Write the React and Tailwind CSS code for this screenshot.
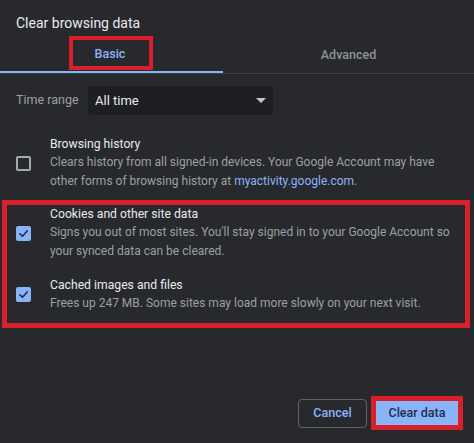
import React from "react";

function Check({ checked }) {
  if (checked) {
    return (
      <div className="w-[15px] h-[15px] rounded-[2px] bg-[#8ab4f8] flex items-center justify-center shrink-0">
        <svg width="11" height="11" viewBox="0 0 12 12" fill="none">
          <path d="M2 6.3 L4.8 9 L10 3.2" stroke="#1b2b4d" strokeWidth="1.8" strokeLinecap="round" strokeLinejoin="round" />
        </svg>
      </div>
    );
  }
  return <div className="w-[15px] h-[15px] rounded-[2px] border-2 border-[#a5a9ae] shrink-0" />;
}

function Item({ checked, title, children, className = "" }) {
  return (
    <div className={"flex items-center " + className}>
      <div className="w-[34px] shrink-0 flex pl-0">
        <Check checked={checked} />
      </div>
      <div className="flex flex-col">
        <div className="text-[12.2px] leading-[18px] text-[#e8eaed]">{title}</div>
        <div className="text-[12px] leading-[19px] text-[#9aa0a6]">{children}</div>
      </div>
    </div>
  );
}

export default function App() {
  return (
    <div
      className="w-[474px] h-[443px] bg-[#28292c] flex flex-col overflow-hidden"
      style={{ fontFamily: "Roboto, 'Noto Sans', Arial, sans-serif" }}
    >
      <div className="pt-[13px] px-[16px] text-[14px] leading-[20px] text-[#e8eaed]">Clear browsing data</div>

      <div className="mt-[3px] flex border-b border-[#3c4043]">
        <div className="relative w-[223px] h-[37px] border-b-2 border-[#8ab4f8] flex items-center justify-center pt-[2px]">
          <span className="text-[12.5px] font-medium text-[#8ab4f8] -ml-[3px]">Basic</span>
          <div className="absolute left-[69px] top-0 w-[84px] h-[34px] border-4 border-[#d81f2a]" />
        </div>
        <div className="flex-1 h-[37px] flex items-center justify-center pt-[2px]">
          <span className="text-[12.5px] font-medium text-[#8e9297]">Advanced</span>
        </div>
      </div>

      <div className="mt-[12px] flex items-center px-[16px]">
        <span className="text-[12.5px] text-[#9aa0a6] w-[72px]">Time range</span>
        <div className="w-[185px] h-[29px] bg-[#1e1f22] rounded-[3px] flex items-center justify-between pl-[7px] pr-[7px] pt-[1px]">
          <span className="text-[13px] text-[#e8eaed]">All time</span>
          <svg width="10" height="6" viewBox="0 0 10 6">
            <path d="M0 0 L10 0 L5 5 Z" fill="#c4c7ca" />
          </svg>
        </div>
      </div>

      <Item checked={false} title="Browsing history" className="mt-[20px] px-[16px]">
        Clears history from all signed-in devices. Your Google Account may have
        <br />
        other forms of browsing history at <span className="text-[#8ab4f8]">myactivity.google.com</span>.
      </Item>

      <div className="mt-[9px] mx-[2px] w-[468px] border-[5px] border-[#d81f2a] pl-[9px] pt-[0px] pb-[10px]">
        <Item checked={true} title="Cookies and other site data">
          Signs you out of most sites. You'll stay signed in to your Google Account so
          <br />
          your synced data can be cleared.
        </Item>
        <Item checked={true} title="Cached images and files" className="mt-[15px]">
          Frees up 247 MB. Some sites may load more slowly on your next visit.
        </Item>
      </div>

      <div className="flex-1" />

      <div className="flex justify-end items-center gap-[4px] pr-[11px] pb-[13px]">
        <button className="w-[69px] h-[29px] rounded-[4px] border border-[#5f6368] text-[12.5px] font-medium text-[#8ab4f8]">
          Cancel
        </button>
        <div className="border-[5px] border-[#d81f2a]">
          <button className="w-[82px] h-[24px] bg-[#8ab4f8] text-[12.5px] text-[#1f2d4c] font-medium block">
            Clear data
          </button>
        </div>
      </div>
    </div>
  );
}
